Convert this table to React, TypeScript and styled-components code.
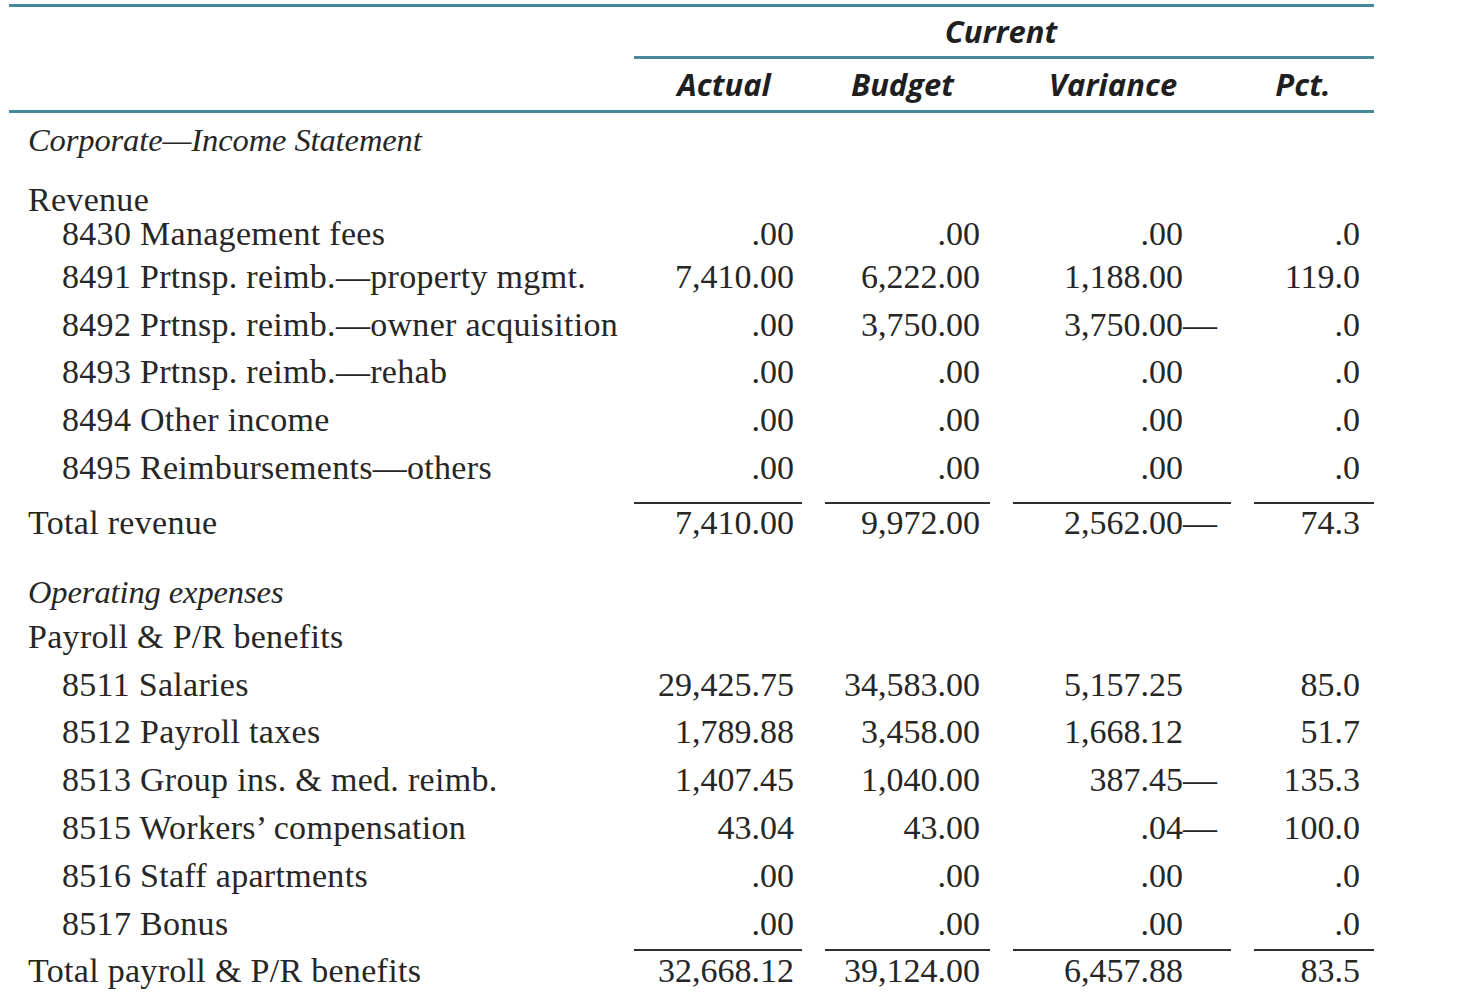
import React from 'react';
import styled, { createGlobalStyle } from 'styled-components';

const TEAL = '#45899a';
const INK = '#262626';
const RULE = '#2e2e2e';

const GlobalStyle = createGlobalStyle`
  html, body { margin: 0; padding: 0; background: #ffffff; }
  body {
    font-family: "Liberation Serif", "Times New Roman", serif;
    color: ${INK};
    -webkit-font-smoothing: antialiased;
  }
`;

const Sheet = styled.div`
  margin: 4px 0 0 9px;
  width: 1365px;
  border-top: 3px solid ${TEAL};
`;

const Grid = styled.div`
  display: grid;
  grid-template-columns: 602px 168px 165px 218px 120px;
  column-gap: 23px;
`;

const TopHead = styled(Grid)`
  height: 52px;
  align-items: stretch;
`;

const ColHead = styled(Grid)`
  height: 54px;
  box-sizing: border-box;
  border-bottom: 3px solid ${TEAL};
  align-items: center;
`;

const HeadText = styled.div`
  font-family: "Open Sans", Lato, sans-serif;
  font-style: italic;
  font-weight: 700;
  font-size: 31px;
  line-height: 1;
  color: #1f1f1f;
  letter-spacing: 0;
`;

const CurrentCell = styled(HeadText)`
  grid-column: 2 / -1;
  box-sizing: border-box;
  border-bottom: 3px solid ${TEAL};
  display: flex;
  align-items: center;
  justify-content: center;
  padding-right: 6px;
`;

const ColTitle = styled(HeadText)<{ $offset: number }>`
  text-align: center;
  padding-left: ${p => (p.$offset > 0 ? p.$offset * 2 : 0)}px;
  padding-right: ${p => (p.$offset < 0 ? -p.$offset * 2 : 0)}px;
`;

const Row = styled(Grid)<{ $h: number; $mt?: number }>`
  height: ${p => p.$h}px;
  margin-top: ${p => p.$mt ?? 0}px;
  align-items: center;
  font-size: 34px;
  line-height: 1;
`;

const TotalRow = styled(Grid)<{ $pt: number; $h: number }>`
  padding-top: ${p => p.$pt}px;
  align-items: end;
  font-size: 34px;
  line-height: 1;
  & > * {
    height: ${p => p.$h}px;
    display: flex;
    align-items: center;
  }
`;

const Label = styled.div<{ $indent: number; $italic?: boolean }>`
  padding-left: ${p => p.$indent}px;
  font-style: ${p => (p.$italic ? 'italic' : 'normal')};
  font-size: ${p => (p.$italic ? '32.5px' : '34px')};
  letter-spacing: ${p => (p.$italic ? '-0.1px' : '0.3px')};
  white-space: nowrap;
`;

const Value = styled.div<{ $pad: number; $rule?: boolean }>`
  text-align: right;
  justify-content: flex-end;
  padding-right: ${p => p.$pad}px;
  white-space: nowrap;
  border-top: ${p => (p.$rule ? `2px solid ${RULE}` : 'none')};
  font-variant-numeric: lining-nums;
`;

const Dash = styled.span<{ $hidden: boolean }>`
  display: inline-block;
  width: 32px;
  text-align: left;
  visibility: ${p => (p.$hidden ? 'hidden' : 'visible')};
`;

type Line = { label: string; vals: [string, string, string, string] };

const PADS = [8, 10, 16, 14];

const revenue: Line[] = [
  { label: '8491 Prtnsp. reimb.\u2014property mgmt.', vals: ['7,410.00', '6,222.00', '1,188.00', '119.0'] },
  { label: '8492 Prtnsp. reimb.\u2014owner acquisition', vals: ['.00', '3,750.00', '3,750.00\u2014', '.0'] },
  { label: '8493 Prtnsp. reimb.\u2014rehab', vals: ['.00', '.00', '.00', '.0'] },
  { label: '8494 Other income', vals: ['.00', '.00', '.00', '.0'] },
  { label: '8495 Reimbursements\u2014others', vals: ['.00', '.00', '.00', '.0'] },
];

const payroll: Line[] = [
  { label: '8511 Salaries', vals: ['29,425.75', '34,583.00', '5,157.25', '85.0'] },
  { label: '8512 Payroll taxes', vals: ['1,789.88', '3,458.00', '1,668.12', '51.7'] },
  { label: '8513 Group ins. & med. reimb.', vals: ['1,407.45', '1,040.00', '387.45\u2014', '135.3'] },
  { label: '8515 Workers\u2019 compensation', vals: ['43.04', '43.00', '.04\u2014', '100.0'] },
  { label: '8516 Staff apartments', vals: ['.00', '.00', '.00', '.0'] },
  { label: '8517 Bonus', vals: ['.00', '.00', '.00', '.0'] },
];

const Cells: React.FC<{ vals: string[]; rule?: boolean }> = ({ vals, rule }) => (
  <>
    {vals.map((v, i) => {
      if (i === 2) {
        const neg = v.endsWith('\u2014');
        const num = neg ? v.slice(0, -1) : v;
        return (
          <Value key={i} $pad={PADS[i]} $rule={rule}>
            {num}
            <Dash $hidden={!neg}>{'\u2014'}</Dash>
          </Value>
        );
      }
      return (
        <Value key={i} $pad={PADS[i]} $rule={rule}>
          {v}
        </Value>
      );
    })}
  </>
);

const ItemRow: React.FC<{ line: Line; mt?: number; h?: number }> = ({ line, mt, h = 47.8 }) => (
  <Row $h={h} $mt={mt}>
    <Label $indent={53}>{line.label}</Label>
    <Cells vals={line.vals} />
  </Row>
);

const SectionRow: React.FC<{ text: string; h: number; mt?: number; italic?: boolean }> = ({ text, h, mt, italic }) => (
  <Row $h={h} $mt={mt}>
    <Label $indent={19} $italic={italic}>{text}</Label>
  </Row>
);

export default function App() {
  return (
    <>
      <GlobalStyle />
      <Sheet>
        <TopHead>
          <div />
          <CurrentCell>Current</CurrentCell>
        </TopHead>
        <ColHead>
          <div />
          <ColTitle $offset={6}>Actual</ColTitle>
          <ColTitle $offset={-5}>Budget</ColTitle>
          <ColTitle $offset={-9}>Variance</ColTitle>
          <ColTitle $offset={-11}>Pct.</ColTitle>
        </ColHead>

        <SectionRow text={'Corporate\u2014Income Statement'} h={54} italic />
        <SectionRow text="Revenue" h={34} mt={16} />
        <ItemRow line={{ label: '8430 Management fees', vals: ['.00', '.00', '.00', '.0'] }} h={33} />
        {revenue.map((l, i) => (
          <ItemRow key={l.label} line={l} mt={i === 0 ? 3 : 0} />
        ))}
        <TotalRow $pt={10} $h={38}>
          <Label $indent={19}>Total revenue</Label>
          <Cells vals={['7,410.00', '9,972.00', '2,562.00\u2014', '74.3']} rule />
        </TotalRow>

        <SectionRow text="Operating expenses" h={41} mt={30} italic />
        <SectionRow text="Payroll & P/R benefits" h={47.8} />
        {payroll.map(l => (
          <ItemRow key={l.label} line={l} />
        ))}
        <TotalRow $pt={1} $h={40}>
          <Label $indent={19}>Total payroll &amp; P/R benefits</Label>
          <Cells vals={['32,668.12', '39,124.00', '6,457.88', '83.5']} rule />
        </TotalRow>
      </Sheet>
    </>
  );
}
